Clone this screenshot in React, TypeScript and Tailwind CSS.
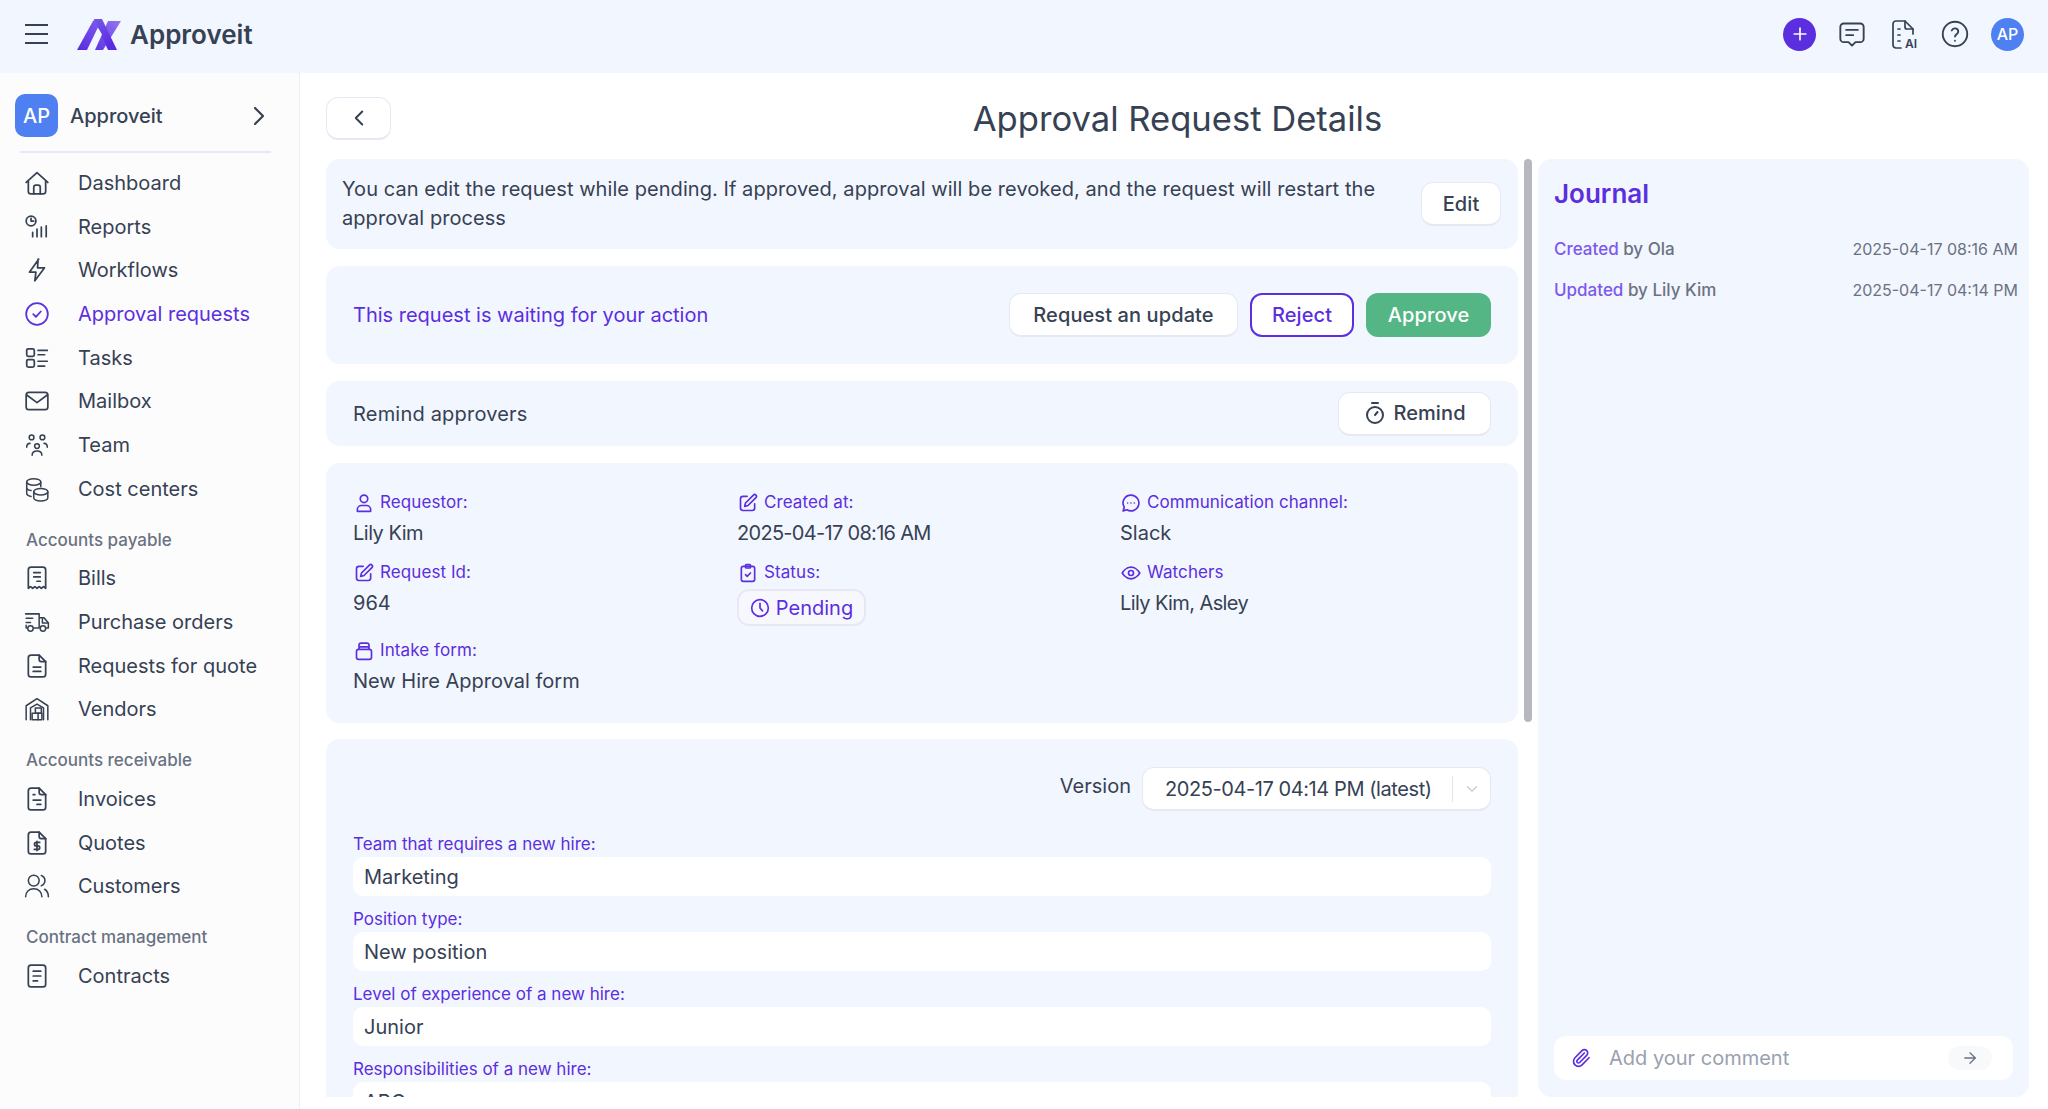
import type { ReactNode } from "react";
import { ArrowRight, ChevronDown, ChevronLeft, ChevronRight, Paperclip, Plus } from "lucide-react";

function Ico({ size = 26, sw = 1.6, className = "", children }: { size?: number; sw?: number; className?: string; children: ReactNode }) {
  return (
    <svg width={size} height={size} viewBox="0 0 24 24" fill="none" stroke="currentColor" strokeWidth={sw} strokeLinecap="round" strokeLinejoin="round" className={`shrink-0 ${className}`}>
      {children}
    </svg>
  );
}

function Logo() {
  return (
    <svg width="44" height="32" viewBox="0 0 44 32" className="shrink-0">
      <defs>
        <linearGradient id="lg1" x1="0" y1="1" x2="0.6" y2="0">
          <stop offset="0" stopColor="#5a2ae0" />
          <stop offset="1" stopColor="#7a58ea" />
        </linearGradient>
        <linearGradient id="lg2" x1="0" y1="1" x2="1" y2="0">
          <stop offset="0" stopColor="#5f33e2" />
          <stop offset="1" stopColor="#9278f2" />
        </linearGradient>
        <linearGradient id="lg3" x1="0" y1="0" x2="0.4" y2="1">
          <stop offset="0" stopColor="#7657ea" />
          <stop offset="1" stopColor="#5a2ae0" />
        </linearGradient>
      </defs>
      <path d="M31 3 L44 3 L26 32 L18 32 Z" fill="url(#lg2)" />
      <path d="M0 32 L16 3 Q17.5 1 20 1 L25 1 L10 32 Z" fill="url(#lg1)" />
      <path d="M17 1 L25 1 L40 32 L31 32 Z" fill="url(#lg3)" />
      <path d="M21.5 10.5 L25 16.5 L21.5 22.5 L18 16.5 Z" fill="#f2f6ff" />
    </svg>
  );
}

const navIcons: Record<string, ReactNode> = {
  dashboard: (
    <Ico><path d="M2 11.5 12 2.5l10 9M4 10v9.5A2.5 2.5 0 0 0 6.5 22h11a2.5 2.5 0 0 0 2.5-2.5V10" /><path d="M9 22v-6a2 2 0 0 1 2-2h2a2 2 0 0 1 2 2v6" /></Ico>
  ),
  reports: (
    <Ico><circle cx="6.5" cy="6.5" r="4.5" /><path d="M6.5 4v2.5H9M8 21v-4M12 21v-7M16 21v-9M20.5 21V11" /></Ico>
  ),
  workflows: (
    <Ico><path d="M13.5 2 5 14h6l-1 8 9-12h-6.5l.5-8Z" /></Ico>
  ),
  approval: (
    <Ico><circle cx="12" cy="12" r="10" /><path d="m8.5 12.2 2.5 2.5 4.5-5" /></Ico>
  ),
  tasks: (
    <Ico><rect x="2.5" y="3.5" width="7" height="7" rx="1.5" /><rect x="2.5" y="13.5" width="7" height="7" rx="1.5" /><path d="M13 5h8.5M13 9h6M13 15h8.5M13 19.5h6" /></Ico>
  ),
  mailbox: (
    <Ico><rect x="2" y="4" width="20" height="16" rx="2.5" /><path d="m2.5 6.5 9.5 7 9.5-7" /></Ico>
  ),
  team: (
    <Ico sw={1.4}><circle cx="7" cy="5" r="2.2" /><circle cx="17" cy="5" r="2.2" /><circle cx="12" cy="13" r="2.2" /><path d="M2.5 14c0-2.2 1.4-3.5 3-3.5M21.5 14c0-2.2-1.4-3.5-3-3.5M7.5 21.5c0-2.6 2-4 4.5-4s4.5 1.4 4.5 4" /></Ico>
  ),
  cost: (
    <Ico sw={1.4}><ellipse cx="9" cy="5.5" rx="6.5" ry="3" /><path d="M2.5 5.5V16c0 1.4 1.6 2.5 4 2.9M15.5 5.5V10M2.5 10.5c0 1.4 1.6 2.5 4 2.9" /><ellipse cx="15.5" cy="14.5" rx="6.5" ry="3" /><path d="M9 14.5V20c0 1.7 2.9 3 6.5 3s6.5-1.3 6.5-3v-5.5" /></Ico>
  ),
  bills: (
    <Ico><path d="M4 21.5V4.5A2.5 2.5 0 0 1 6.5 2h11A2.5 2.5 0 0 1 20 4.5v17l-2-1.5-2 1.5-2-1.5-2 1.5-2-1.5-2 1.5-2-1.5-2 1.5Z" /><path d="M9 7h6M9 11h6M12 15h3" /></Ico>
  ),
  purchase: (
    <Ico sw={1.4}><path d="M1.5 4.5H14v13H9.5M14 8h4.5l4 5v4.5H20M2 8.5h6M2 12.5h4M2 15v2.5h.5" /><circle cx="6" cy="18" r="2.5" /><circle cx="17.5" cy="18" r="2.5" /><path d="M17 8v5h5.5" /></Ico>
  ),
  rfq: (
    <Ico><path d="M14 2H6.5A2.5 2.5 0 0 0 4 4.5v15A2.5 2.5 0 0 0 6.5 22h11a2.5 2.5 0 0 0 2.5-2.5V8l-6-6Z" /><path d="M14 2v4a2 2 0 0 0 2 2h4M8.5 13h7M8.5 17h7" /></Ico>
  ),
  vendors: (
    <Ico sw={1.4}><path d="M2 22V9l10-6.5L22 9v13" /><path d="M6 22V11l6-3.5 6 3.5v11" /><rect x="7.5" y="16" width="5.5" height="6" /><rect x="10.5" y="11" width="5.5" height="5" /><path d="M13 16h3.5v6H13" /></Ico>
  ),
  invoices: (
    <Ico><path d="M14 2H6.5A2.5 2.5 0 0 0 4 4.5v15A2.5 2.5 0 0 0 6.5 22h11a2.5 2.5 0 0 0 2.5-2.5V8l-6-6Z" /><path d="M14 2v4a2 2 0 0 0 2 2h4M8.5 8h1.5M8.5 13h7M12 17h3.5" /></Ico>
  ),
  quotes: (
    <Ico><path d="M14 2H6.5A2.5 2.5 0 0 0 4 4.5v15A2.5 2.5 0 0 0 6.5 22h11a2.5 2.5 0 0 0 2.5-2.5V8l-6-6Z" /><path d="M14 2v4a2 2 0 0 0 2 2h4M14.5 11.5h-3.2a1.6 1.6 0 0 0 0 3.2h1.6a1.6 1.6 0 0 1 0 3.2H9.5M12 10.5v8.5" /></Ico>
  ),
  customers: (
    <Ico sw={1.4}><circle cx="9" cy="7" r="5" /><path d="M1.5 22c0-4.5 3-7.5 7.5-7.5s7.5 3 7.5 7.5M16 2.3a5 5 0 0 1 0 9.4M19 15c2.2 1.2 3.5 3.6 3.5 7" /></Ico>
  ),
  contracts: (
    <Ico><rect x="4" y="2" width="16" height="20" rx="2.5" /><path d="M8.5 7.5h7M8.5 12h7M8.5 16.5h4" /></Ico>
  ),
};

function NavItem({ icon, label, active }: { icon: string; label: string; active?: boolean }) {
  return (
    <div className={`flex h-[43.7px] items-center gap-[28px] pl-[24px] text-[20px] ${active ? "text-[#5b2ee0]" : "text-gray-700"}`}>
      {navIcons[icon]}
      <span>{label}</span>
    </div>
  );
}

function NavLabel({ children }: { children: ReactNode }) {
  return <div className="flex h-[46px] items-end pb-[5px] pl-[26px] text-[17px] leading-6 font-medium text-gray-500">{children}</div>;
}

function Sidebar() {
  return (
    <aside className="h-full w-[300px] shrink-0 border-r border-dotted border-[#dfe3f3] bg-[#fcfcfd] pt-[21px]">
      <div className="flex h-[43px] items-center pr-[24px] pl-[15px]">
        <div className="flex h-[43px] w-[43px] items-center justify-center rounded-[10px] bg-[#4f80f2] text-[20px] font-medium text-white">AP</div>
        <span className="ml-[12px] text-[20px] font-medium text-gray-700">Approveit</span>
        <ChevronRight size={32} strokeWidth={1.6} className="ml-auto text-gray-700" />
      </div>
      <div className="mt-[14px] mb-[8px] ml-[20px] h-[2px] w-[251px] bg-[#e7e8f3]" />
      <NavItem icon="dashboard" label="Dashboard" />
      <NavItem icon="reports" label="Reports" />
      <NavItem icon="workflows" label="Workflows" />
      <NavItem icon="approval" label="Approval requests" active />
      <NavItem icon="tasks" label="Tasks" />
      <NavItem icon="mailbox" label="Mailbox" />
      <NavItem icon="team" label="Team" />
      <NavItem icon="cost" label="Cost centers" />
      <NavLabel>Accounts payable</NavLabel>
      <NavItem icon="bills" label="Bills" />
      <NavItem icon="purchase" label="Purchase orders" />
      <NavItem icon="rfq" label="Requests for quote" />
      <NavItem icon="vendors" label="Vendors" />
      <NavLabel>Accounts receivable</NavLabel>
      <NavItem icon="invoices" label="Invoices" />
      <NavItem icon="quotes" label="Quotes" />
      <NavItem icon="customers" label="Customers" />
      <NavLabel>Contract management</NavLabel>
      <NavItem icon="contracts" label="Contracts" />
    </aside>
  );
}

function Header() {
  return (
    <header className="flex h-[73px] shrink-0 items-center bg-[#f2f6ff] pr-[24px] pb-[5px] pl-[25px]">
      <div className="flex h-[20px] w-[23px] flex-col justify-between">
        <div className="h-[2px] bg-gray-700" />
        <div className="h-[2px] bg-gray-700" />
        <div className="h-[2px] bg-gray-700" />
      </div>
      <div className="ml-[29px]">
        <Logo />
      </div>
      <span className="ml-[9px] text-[26px] font-semibold text-gray-700">Approveit</span>
      <div className="ml-auto flex items-center gap-[22px] text-gray-700">
        <div className="flex h-[33px] w-[33px] items-center justify-center rounded-full bg-[#5b2ee0] text-white">
          <Plus size={20} strokeWidth={2} />
        </div>
        <Ico size={28} sw={1.6}>
          <path d="M5 3h14a3 3 0 0 1 3 3v10a3 3 0 0 1-3 3h-4l-3 3-3-3H5a3 3 0 0 1-3-3V6a3 3 0 0 1 3-3Z" /><path d="M7 8.5h10M7 13h6" />
        </Ico>
        <div className="flex w-[31px] justify-center">
          <svg width="31" height="31" viewBox="0 0 31 31" fill="none" stroke="currentColor" strokeWidth="1.7" strokeLinecap="round" strokeLinejoin="round" className="overflow-visible">
            <path d="M13 29H8a3 3 0 0 1-3-3V5a3 3 0 0 1 3-3h9l8 8v5" /><path d="M17 2v6a2 2 0 0 0 2 2h6M10 10h2M10 16h2M10 22h2" />
            <text x="17" y="28.5" fontSize="12" fontWeight="600" fill="currentColor" stroke="none">AI</text>
          </svg>
        </div>
        <Ico size={28} sw={1.6}>
          <circle cx="12" cy="12" r="10.5" /><path d="M9.2 9a2.9 2.9 0 0 1 5.6 1c0 1.9-2.8 2.4-2.8 4.2M12 17.8h.01" />
        </Ico>
        <div className="flex h-[33px] w-[33px] items-center justify-center rounded-full bg-[#4f80f2] text-[16px] font-medium text-white">AP</div>
      </div>
    </header>
  );
}

function Btn({ className = "", children }: { className?: string; children: ReactNode }) {
  return <div className={`flex h-[44px] items-center justify-center rounded-[12px] text-[20px] font-medium tracking-[0.005em] ${className}`}>{children}</div>;
}

const whiteBtn = "border border-[#e6e8f4] border-b-2 bg-white text-gray-700";

function Info({ icon, label, valueClass = "", children }: { icon: ReactNode; label: string; valueClass?: string; children: ReactNode }) {
  return (
    <div>
      <div className="flex h-[26px] items-center gap-[6px] pt-[2px] pl-px text-[17px] tracking-[0.005em] text-[#5b2ee0]">
        {icon}
        <span>{label}</span>
      </div>
      <div className={`mt-[4px] text-[20px] leading-[29px] text-gray-700 ${valueClass}`}>{children}</div>
    </div>
  );
}

function Field({ label, value }: { label: string; value: string }) {
  return (
    <div>
      <div className="mb-px h-6 text-[17px] leading-6 text-[#5b2ee0]">{label}</div>
      <div className="flex h-[39px] items-center rounded-[10px] bg-white px-[11px] text-[20px] text-gray-700">{value}</div>
    </div>
  );
}

function Details() {
  const editIcon = (
    <Ico size={20} sw={2}>
      <path d="M11 4H6a3 3 0 0 0-3 3v11a3 3 0 0 0 3 3h11a3 3 0 0 0 3-3v-5" /><path d="M18.5 2.5a2.1 2.1 0 0 1 3 3L12 15l-4 1 1-4 9.5-9.5Z" />
    </Ico>
  );
  return (
    <div className="relative flex w-[1206px] shrink-0 flex-col gap-[17px] overflow-hidden pr-[14px]">
      {/* Fake scroll thumb */}
      <div className="absolute top-0 right-0 h-[563px] w-2 rounded-full bg-[#b6b7bf]" />

      <div className="flex h-[90px] shrink-0 items-center justify-between rounded-[14px] bg-[#f2f6ff] pr-[17px] pl-[16px]">
        <p className="w-[1040px] text-[20px] leading-[29px] tracking-[0.003em] text-gray-700">
          You can edit the request while pending. If approved, approval will be revoked, and the request will restart the approval process
        </p>
        <Btn className={`w-[80px] ${whiteBtn}`}>Edit</Btn>
      </div>

      <div className="flex h-[98px] shrink-0 items-center justify-between rounded-[14px] bg-[#f2f6ff] pr-[27px] pl-[27px]">
        <span className="text-[20px] text-[#5b2ee0]">This request is waiting for your action</span>
        <div className="flex items-center gap-[12px]">
          <Btn className={`w-[229px] ${whiteBtn}`}>Request an update</Btn>
          <Btn className="w-[104px] border-2 border-[#5b2ee0] bg-white text-[#5b2ee0]">Reject</Btn>
          <Btn className="w-[125px] bg-[#54b685] text-white">Approve</Btn>
        </div>
      </div>

      <div className="flex h-[65px] shrink-0 items-center justify-between rounded-[14px] bg-[#f2f6ff] pr-[27px] pl-[27px]">
        <span className="text-[20px] tracking-[0.01em] text-gray-700">Remind approvers</span>
        <Btn className={`w-[153px] gap-[6px] ${whiteBtn}`}>
          <Ico size={24} sw={2}>
            <circle cx="12" cy="14" r="8" /><path d="M9 2h6M12 14l2.5-3" />
          </Ico>
          Remind
        </Btn>
      </div>

      <div className="grid h-[260px] shrink-0 grid-cols-[384px_383px_1fr] content-start gap-y-[11px] rounded-[14px] bg-[#f2f6ff] pt-[26px] pl-[27px]">
        <Info label="Requestor:" valueClass="tracking-[-0.5px]" icon={<Ico size={20} sw={2}><circle cx="12" cy="7" r="4.5" /><path d="M4 22v-2a5 5 0 0 1 5-5h6a5 5 0 0 1 5 5v2H4Z" /></Ico>}>Lily Kim</Info>
        <Info label="Created at:" valueClass="tracking-[-0.7px]" icon={editIcon}>2025-04-17 08:16 AM</Info>
        <Info label="Communication channel:" icon={<Ico size={20} sw={2}><path d="M12 2.5a9.5 9.5 0 1 1-5 17.6L2.5 21.5l1.4-4.5A9.5 9.5 0 0 1 12 2.5Z" /><path d="M8 12h.01M12 12h.01M16 12h.01" /></Ico>}>Slack</Info>
        <Info label="Request Id:" icon={editIcon}>964</Info>
        <div>
          <div className="flex h-[26px] items-center gap-[6px] pt-[2px] pl-px text-[17px] tracking-[0.005em] text-[#5b2ee0]">
            <Ico size={20} sw={2}>
              <rect x="4" y="4" width="16" height="18" rx="2.5" /><rect x="9" y="2" width="6" height="4" rx="1" /><path d="m9 14 2 2 4-4" />
            </Ico>
            <span>Status:</span>
          </div>
          <div className="mt-[4px] flex h-[37px] w-[129px] items-center justify-center gap-[6px] rounded-[12px] border-2 border-[#e7e8f4] bg-[#f7f8fe] text-[20px] text-[#5b2ee0]">
            <Ico size={20} sw={2}>
              <circle cx="12" cy="12" r="10" /><path d="M12 6.5V12l3 3.5" />
            </Ico>
            Pending
          </div>
        </div>
        <Info label="Watchers" valueClass="tracking-[-0.6px]" icon={<Ico size={20} sw={2}><path d="M1.5 12S5.5 5 12 5s10.5 7 10.5 7-4 7-10.5 7S1.5 12 1.5 12Z" /><circle cx="12" cy="12" r="3" /></Ico>}>Lily Kim, Asley</Info>
        <Info label="Intake form:" icon={<Ico size={20} sw={2}><rect x="3" y="10" width="18" height="12" rx="2.5" /><path d="M6 10V5a2.5 2.5 0 0 1 2.5-2.5h7A2.5 2.5 0 0 1 18 5v5M6 7h12" /></Ico>}>New Hire Approval form</Info>
      </div>

      <div className="-mt-px shrink-0 rounded-[14px] bg-[#f2f6ff] pt-[28px] pr-[27px] pb-[20px] pl-[27px]">
        <div className="flex items-center justify-end gap-[11px]">
          <span className="-mt-[6px] text-[20px] text-gray-700">Version</span>
          <div className="flex h-[44px] w-[349px] items-center rounded-[12px] border border-[#e6e8f4] border-b-2 bg-white pl-[22px] text-[20px] tracking-[-0.42px] text-gray-700">
            <span>2025-04-17 04:14 PM (latest)</span>
            <div className="mr-[10px] ml-auto h-[26px] w-px bg-[#e2e4ea]" />
            <ChevronDown size={18} strokeWidth={1.5} className="mr-[9px] text-[#c7c9d1]" />
          </div>
        </div>
        <div className="mt-[21px] flex flex-col gap-[11px]">
          <Field label="Team that requires a new hire:" value="Marketing" />
          <Field label="Position type:" value="New position" />
          <Field label="Level of experience of a new hire:" value="Junior" />
          <Field label="Responsibilities of a new hire:" value="ABC" />
        </div>
      </div>
    </div>
  );
}

function Journal() {
  return (
    <div className="ml-[6px] flex w-[491px] shrink-0 flex-col rounded-[14px] bg-[#f2f6ff] pt-[16px] pr-[11px] pb-[17px] pl-[16px]">
      <h2 className="text-[26px] leading-[38px] font-semibold text-[#5b2ee0]">Journal</h2>
      <div className="mt-[24px] flex h-[41px] items-start justify-between text-[16px] leading-6">
        <span className="text-[17px] font-medium text-gray-500"><span className="text-[#7c58ec]">Created</span> by Ola</span>
        <span className="text-gray-500">2025-04-17 08:16 AM</span>
      </div>
      <div className="flex h-[41px] items-start justify-between text-[16px] leading-6">
        <span className="text-[17px] font-medium text-gray-500"><span className="text-[#7c58ec]">Updated</span> by Lily Kim</span>
        <span className="text-gray-500">2025-04-17 04:14 PM</span>
      </div>
      <div className="mt-auto mr-[5px] flex h-[44px] items-center rounded-[12px] bg-white pr-[21px] pl-[17px]">
        <Paperclip size={20} strokeWidth={2} className="text-[#5b2ee0]" />
        <span className="ml-[18px] text-[20px] text-gray-400">Add your comment</span>
        <div className="ml-auto flex h-[24px] w-[44px] items-center justify-center rounded-full bg-[#f8f9fb]">
          <ArrowRight size={18} strokeWidth={1.7} className="text-gray-500" />
        </div>
      </div>
    </div>
  );
}

export default function App() {
  return (
    <div className="flex h-[1109px] flex-col overflow-hidden bg-white font-['Inter',sans-serif] text-gray-700">
      <Header />
      <div className="flex min-h-0 flex-1">
        <Sidebar />
        <main className="flex min-w-0 flex-1 flex-col pr-[19px] pb-[12px] pl-[26px]">
          <div className="grid shrink-0 grid-cols-[1fr_auto_1fr] items-center pt-[24px]">
            <div className="flex h-[43px] w-[65px] items-center justify-center rounded-[12px] border border-[#e6e8f4] border-b-2">
              <ChevronLeft size={26} strokeWidth={1.8} className="text-gray-700" />
            </div>
            <h1 className="text-[34.6px] leading-[43px] font-normal text-gray-700">Approval Request Details</h1>
            <div />
          </div>
          <div className="mt-[19px] flex min-h-0 flex-1">
            <Details />
            <Journal />
          </div>
        </main>
      </div>
    </div>
  );
}
